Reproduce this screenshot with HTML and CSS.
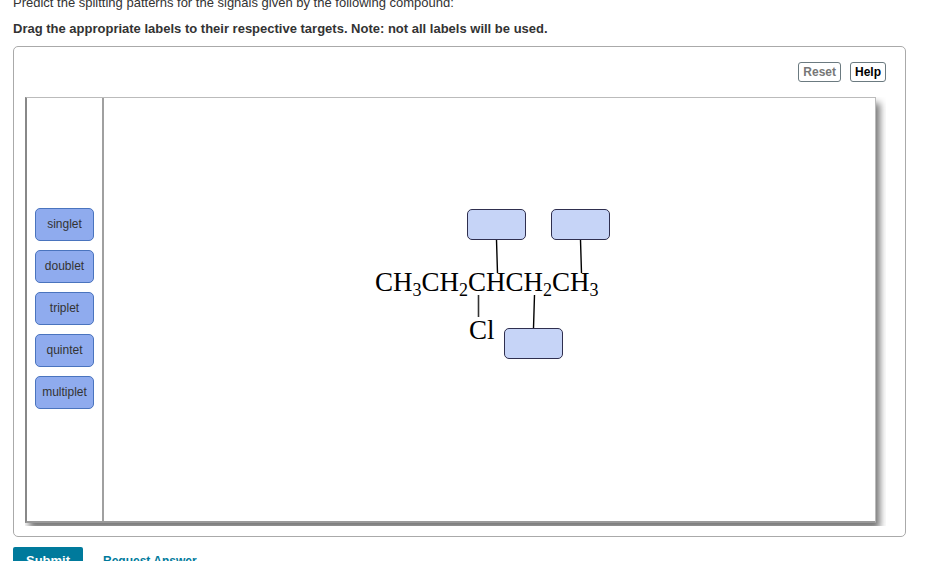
FILE: index.html
```html
<!DOCTYPE html>
<html lang="en">

<head>
    <meta charset="UTF-8">
    <meta name="viewport" content="width=device-width, initial-scale=1.0">
    <title>Splitting patterns</title>
    <link rel="stylesheet" href="styles.css">
</head>

<body>
    <main class="question">
        <p class="prompt">Predict the splitting patterns for the signals given by the following compound:</p>
        <p class="instructions">Drag the appropriate labels to their respective targets. Note: not all labels will be used.</p>

        <section class="panel">
            <div class="toolbar">
                <button type="button" class="tool reset">Reset</button>
                <button type="button" class="tool">Help</button>
            </div>
            <div class="stage">
                <div class="workspace">
                    <div class="labels">
                        <button type="button" class="label">singlet</button>
                        <button type="button" class="label">doublet</button>
                        <button type="button" class="label">triplet</button>
                        <button type="button" class="label">quintet</button>
                        <button type="button" class="label">multiplet</button>
                    </div>
                    <div class="canvas">
                        <div class="molecule">
                            <svg class="bonds" width="240" height="151" viewBox="0 0 240 151">
                                <path d="M121.5 31L122.5 64M205.5 31L206.5 64M159.5 86L158.5 119" stroke="#000" stroke-width="1.4" />
                                <path d="M103.5 86V108" stroke="#333" stroke-width="1.6" />
                            </svg>
                            <div class="formula">CH<sub>3</sub>CH<sub>2</sub>CHCH<sub>2</sub>CH<sub>3</sub></div>
                            <div class="chlorine">Cl</div>
                            <div class="target target-ch"></div>
                            <div class="target target-ch3"></div>
                            <div class="target target-ch2"></div>
                        </div>
                    </div>
                </div>
            </div>
        </section>

        <div class="actions">
            <button type="button" class="submit">Submit</button>
            <a class="request" href="#">Request Answer</a>
        </div>
    </main>
</body>

</html>
```
FILE: styles.css
```css
* {
    margin: 0;
    padding: 0;
    box-sizing: border-box;
}

body {
    height: 100vh;
    overflow: hidden;
    background: #fff;
    color: #333;
    font-family: "Liberation Sans", Arial, sans-serif;
    font-size: 13px;
    line-height: 16px;
}

button {
    font-family: inherit;
    cursor: pointer;
}

.question {
    padding: 0 25px 0 13px;
}

.prompt {
    margin-top: -5px;
}

.instructions {
    margin-top: 10px;
    font-weight: bold;
}

/* bordered question area */
.panel {
    margin-top: 9px;
    padding: 15px 19px 10px 11px;
    border: 1px solid #aaa;
    border-radius: 5px;
}

.toolbar {
    display: flex;
    justify-content: flex-end;
    gap: 9px;
}

.tool {
    height: 20px;
    padding: 0 4px;
    border: 1px solid #6b7a80;
    border-radius: 3px;
    background: #fff;
    color: #000;
    font-size: 12px;
    font-weight: bold;
    line-height: 18px;
}

.reset {
    color: #777;
}

/* cuts the shadow off just below the workspace */
.stage {
    margin-top: 15px;
    padding: 0 10px 3px 0;
    overflow: hidden;
}

.workspace {
    display: flex;
    height: 426px;
    border: 1px solid #bbb;
    border-left: 2px solid #888;
    border-bottom: 2px solid #999;
    background: #fff;
    box-shadow: 4px 6px 7px #777;
}

.labels {
    display: flex;
    flex-direction: column;
    gap: 9px;
    padding: 110px 8px 0;
    border-right: 2px solid #a0a0a0;
}

.label {
    width: 59px;
    height: 33px;
    padding-bottom: 2px;
    border: 1px solid #4a74be;
    border-radius: 5px;
    background: #8fabee;
    color: #333;
    font-size: 12px;
}

.canvas {
    flex: 1;
    display: flex;
    justify-content: center;
    padding-top: 111px;
}

.molecule {
    position: relative;
    width: 229px;
    height: 151px;
    color: #000;
    font-family: "Liberation Serif", "Times New Roman", serif;
    font-size: 27px;
    line-height: 30px;
    white-space: nowrap;
}

.molecule sub {
    font-size: 18px;
    line-height: 0;
    vertical-align: -5px;
}

.bonds,
.formula,
.chlorine,
.target {
    position: absolute;
}

.bonds {
    left: 0;
    top: 0;
}

.formula {
    left: 0;
    top: 58px;
}

.chlorine {
    left: 94px;
    top: 106px;
}

/* drop targets */
.target {
    width: 59px;
    height: 31px;
    border: 1px solid #2f2f4f;
    border-radius: 5px;
    background: #c6d4f7;
}

.target-ch {
    left: 92px;
    top: 0;
}

.target-ch3 {
    left: 176px;
    top: 0;
}

.target-ch2 {
    left: 129px;
    top: 119px;
}

.actions {
    display: flex;
    align-items: center;
    gap: 20px;
    margin-top: 10px;
}

.submit {
    width: 70px;
    height: 28px;
    padding-bottom: 2px;
    border: 0;
    border-radius: 2px;
    background: #007a9c;
    color: #fff;
    font-size: 13px;
    font-weight: bold;
}

.request {
    color: #007a9c;
    font-size: 12px;
    font-weight: bold;
    text-decoration: none;
}
```
